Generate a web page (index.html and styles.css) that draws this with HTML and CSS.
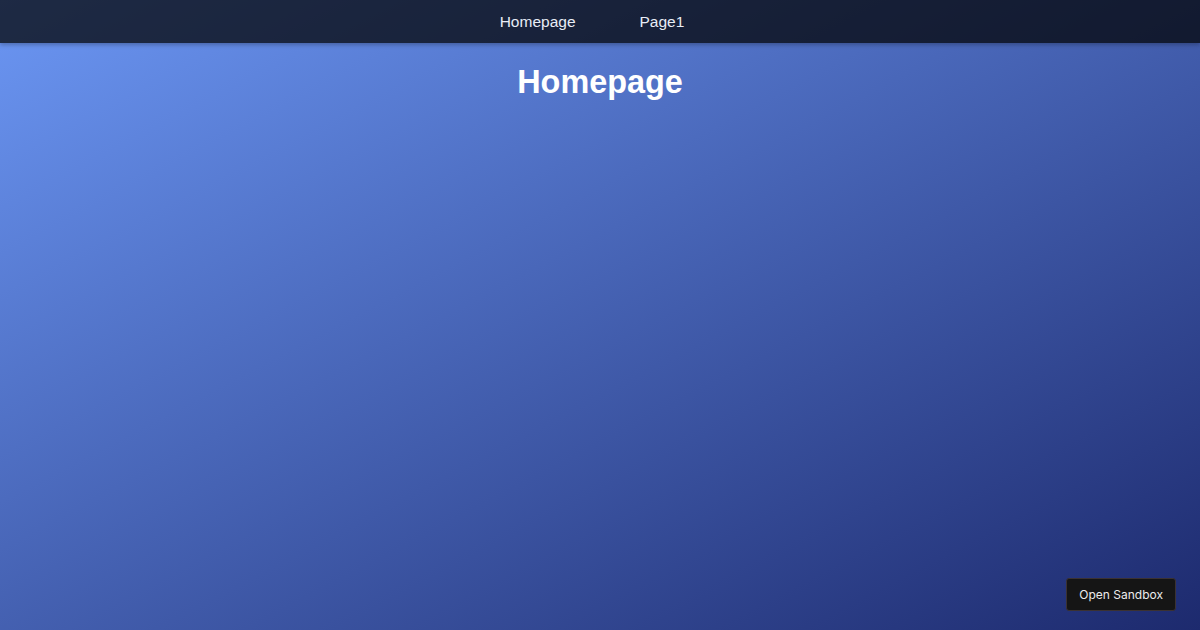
FILE: index.html
```html
<!DOCTYPE html>
<html lang="en">
<head>
<meta charset="utf-8">
<title>Homepage</title>
<link rel="stylesheet" href="styles.css">
</head>
<body>
  <div class="app">
    <nav class="navbar">
      <a class="nav-link" href="#">Homepage</a>
      <a class="nav-link" href="#">Page1</a>
    </nav>
    <main class="content">
      <h1 class="title">Homepage</h1>
    </main>
  </div>
  <button class="sandbox-btn">Open Sandbox</button>
</body>
</html>
```
FILE: styles.css
```css
html, body {
  margin: 0;
  padding: 0;
  height: 100%;
}

body {
  font-family: "Liberation Sans", Arial, sans-serif;
  background: linear-gradient(to bottom right, #6b96f3 0%, #1d2a6e 100%);
  min-height: 100vh;
  overflow: hidden;
}

.app {
  min-height: 100vh;
  display: flex;
  flex-direction: column;
}

.navbar {
  height: 43px;
  display: flex;
  align-items: center;
  justify-content: center;
  gap: 64px;
  padding-right: 16px;
  background: rgba(0, 0, 0, 0.72);
  box-shadow: 0 2px 4px rgba(0, 0, 0, 0.25);
}

.nav-link {
  color: #e8edf6;
  text-decoration: none;
  font-size: 15.5px;
}

.content {
  flex: 1;
}

.title {
  margin: 21px 0 0;
  text-align: center;
  color: #ffffff;
  font-size: 32.4px;
  font-weight: 700;
}

.sandbox-btn {
  position: fixed;
  right: 24px;
  bottom: 19px;
  height: 33px;
  padding: 0 12px;
  background: #151515;
  color: #ececec;
  border: 1px solid #3b3232;
  border-radius: 3px;
  font-family: Inter, "Liberation Sans", sans-serif;
  font-size: 12px;
  cursor: pointer;
}
```
